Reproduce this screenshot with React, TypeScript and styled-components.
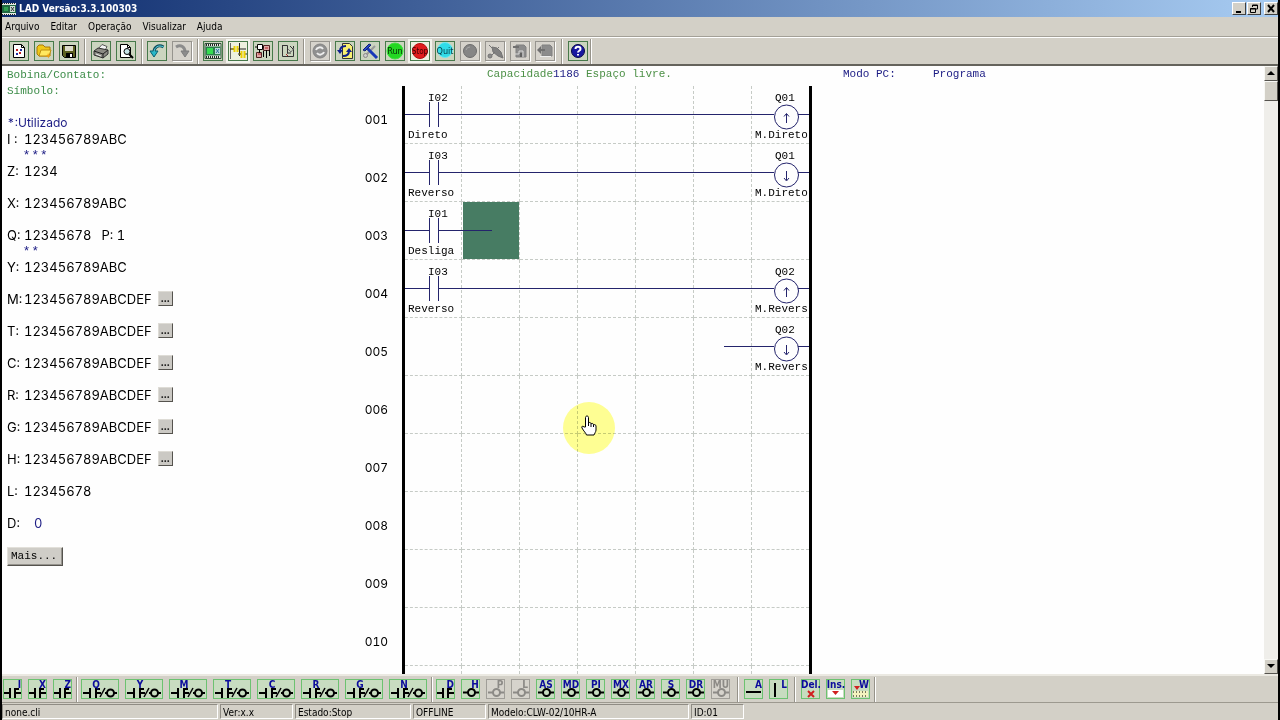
import React from "react";
import styled, { createGlobalStyle } from "styled-components";

const GlobalStyle = createGlobalStyle`
  *, *::before, *::after { box-sizing: border-box; }
  body { margin: 0; background: #000; }
  button { font: inherit; padding: 0; margin: 0; }
`;

const ui = `"DejaVu Sans Condensed", "DejaVu Sans", sans-serif`;
const mono = `"Liberation Mono", monospace`;
const wide = `Inter, "Liberation Sans", sans-serif`;
const face = "#d3d0c7";
const navy = "#1c1c84";

const Window = styled.div`
  display: flex;
  flex-direction: column;
  height: 100vh;
  min-width: 900px;
  padding: 0 2px;
  background: #000;
  font-family: ${ui};
  font-size: 10px;
  color: #000;
`;

const TitleBar = styled.header`
  display: flex;
  align-items: center;
  height: 17px;
  flex: none;
  gap: 3px;
  background: linear-gradient(90deg, #0c2a6c, #a8ccf2);
  color: #fff;
`;
const Title = styled.h1`
  flex: 1;
  margin: 0;
  font-size: 10px;
  line-height: 16px;
  font-weight: bold;
`;
const CaptionButtons = styled.div`
  display: flex;
  gap: 1px;
  & > :last-child { margin-left: 2px; }
`;
const CaptionButton = styled.button`
  width: 14px;
  height: 13px;
  display: grid;
  place-items: center;
  background: ${face};
  border: 1px solid;
  border-color: #fff #404040 #404040 #fff;
`;

const MenuBar = styled.nav`
  display: flex;
  flex: none;
  height: 20px;
  padding: 0 3px;
  gap: 11px;
  background: ${face};
  border-bottom: 1px solid #a3a097;
`;
const MenuItem = styled.button`
  border: 0;
  background: none;
  line-height: 18px;
`;

const ToolBar = styled.div`
  display: flex;
  align-items: center;
  flex: none;
  height: 29px;
  padding-left: 7px;
  background: ${face};
  border-top: 1px solid #fff;
  border-bottom: 2px solid #65635c;
`;
const ElementBar = styled(ToolBar)`
  height: 29px;
  padding-left: 1px;
  border-top: 2px solid #ebe9e2;
  border-bottom: 1px solid #9c998f;
`;
const Group = styled.div<{ $gap: number }>`
  display: flex;
  gap: ${(p) => p.$gap}px;
`;
const Divider = styled.span<{ $m: string }>`
  width: 2px;
  height: 25px;
  margin: ${(p) => p.$m};
  border-left: 1px solid #96938a;
  border-right: 1px solid #fff;
`;
const ToolButton = styled.button<{ $off?: boolean; $pressed?: boolean }>`
  width: 20px;
  height: 20px;
  display: grid;
  place-items: center;
  background: ${(p) => (p.$pressed ? "#edf0df" : p.$off ? "#d6d3cc" : "#cbd5bf")};
  border: 1px solid ${(p) => (p.$off ? "#96948e" : "#47794a")};
  box-shadow: ${(p) =>
    p.$pressed ? "0 0 0 2px #f2f2ec, -3px -3px 0 -1px #9a988f" : p.$off ? "1px 1px 0 #fff" : "none"};
  & svg { display: block; }
`;
const ElementButton = styled.button<{ $off?: boolean; $wide?: boolean }>`
  width: ${(p) => (p.$wide ? 38 : 19)}px;
  height: 20px;
  display: grid;
  place-items: center;
  background: ${(p) => (p.$off ? "#d6d3cc" : "#c8dcc0")};
  border: 1px solid ${(p) => (p.$off ? "#a09e98" : "#6cc270")};
  & svg { display: block; overflow: visible; }
`;

const Workspace = styled.main`
  display: grid;
  grid-template-columns: 350px 460px 1fr 14px;
  grid-template-rows: minmax(0, 1fr);
  flex: 1;
  min-height: 0;
  overflow: hidden;
  background: #fefefe;
`;

const SidePanel = styled.aside`
  padding: 1px 0 0 5px;
  font-family: ${wide};
  font-size: 13px;
  font-variant-numeric: tabular-nums;
  line-height: 16px;
`;
const SymbolInfo = styled.p`
  margin: 0 0 16px;
  font-family: ${mono};
  font-size: 11px;
  line-height: 16px;
  color: #3c8c48;
`;
const UsedLegend = styled.p`
  margin: 0;
  font-size: 12px;
  line-height: 16px;
  color: ${navy};
`;
const DeviceRow = styled.div`
  display: grid;
  grid-template-columns: 17px auto auto;
  grid-template-rows: 16px 16px;
  justify-content: start;
`;
const DeviceSet = styled.span<{ $value?: boolean }>`
  padding-left: ${(p) => (p.$value ? 10 : 0)}px;
  color: ${(p) => (p.$value ? navy : "#000")};
`;
const Page = styled.span`
  padding-left: 10px;
`;
const UsedMarks = styled.span`
  grid-column: 2 / -1;
  grid-row: 2;
  font-family: "Liberation Sans", sans-serif;
  color: ${navy};
`;
const MoreButton = styled.button`
  width: 15px;
  height: 15px;
  margin-left: 6px;
  background: #cbc9c4;
  border: 1px solid;
  border-color: #dedcd6 #55534e #55534e #dedcd6;
  font-size: 11px;
  font-weight: bold;
  line-height: 9px;
`;
const MaisButton = styled.button`
  display: block;
  width: 56px;
  height: 19px;
  background: #cfcdc7;
  border: 1px solid;
  border-color: #e2e0da #55534e #55534e #e2e0da;
  box-shadow: inset -1px -1px 0 #96948e;
  font-family: ${mono};
  font-size: 11px;
  line-height: 15px;
  text-align: left;
  padding-left: 3px;
`;

const Ladder = styled.section`
  position: relative;
  font-family: ${mono};
  font-size: 11px;
`;
const Capacity = styled.p`
  margin: 0;
  height: 20px;
  padding-left: 135px;
  line-height: 16px;
  color: #4c9046;
  white-space: pre;
  & b { font-weight: normal; color: ${navy}; }
`;
const Rung = styled.div`
  display: grid;
  grid-template-columns: 50px 1fr;
  height: 58px;
`;
const RungNumber = styled.span`
  padding: 25px 14px 0 0;
  font-family: ${wide};
  font-size: 12px;
  font-variant-numeric: tabular-nums;
  line-height: 18px;
  text-align: right;
`;
const RungCells = styled.div`
  display: grid;
  grid-template-columns: 57px repeat(5, 58px) 57px;
  border: solid #000;
  border-width: 0 3px;
`;
const Cell = styled.div<{ $selected?: boolean }>`
  display: grid;
  border-bottom: 1px dashed #c6cbc6;
  border-right: 1px dashed #c6cbc6;
  padding-left: ${(p) => (p.$selected ? 1 : 0)}px;
  background: ${(p) => (p.$selected ? "#477c63 content-box" : "none")};
  &:last-child { border-right: 0; }
  & > * { grid-area: 1 / 1; min-width: 0; }
`;
const DeviceName = styled.span`
  padding: 5px 0 0 23px;
  line-height: 14px;
`;
const Comment = styled.span`
  padding: 42px 0 0 3px;
  line-height: 14px;
`;
const Pointer = styled.div`
  position: absolute;
  left: 211px;
  top: 336px;
  width: 52px;
  height: 52px;
  border-radius: 50%;
  background: #ffff94;
  mix-blend-mode: multiply;
`;
const Hand = styled.svg`
  position: absolute;
  left: 228px;
  top: 348px;
`;

const ModePanel = styled.section`
  display: grid;
  grid-template-columns: 90px auto;
  justify-content: start;
  align-content: start;
  padding-left: 31px;
  font-family: ${mono};
  font-size: 11px;
  line-height: 16px;
  color: ${navy};
`;

const ScrollBar = styled.div`
  display: flex;
  flex-direction: column;
  background: #efeeea;
`;
const ScrollButton = styled.button`
  height: 15px;
  display: grid;
  place-items: center;
  background: ${face};
  border: 1px solid;
  border-color: #f8f8f4 #55534e #55534e #f8f8f4;
`;
const Thumb = styled.div`
  height: 20px;
  background: ${face};
  border: 1px solid;
  border-color: #f8f8f4 #55534e #55534e #f8f8f4;
`;
const Track = styled.div`
  flex: 1;
`;

const StatusBar = styled.footer`
  display: flex;
  flex: none;
  height: 17px;
  gap: 2px;
  padding: 1px 0;
  background: ${face};
`;
const StatusPane = styled.span<{ $w: number }>`
  width: ${(p) => p.$w}px;
  padding-left: 2px;
  line-height: 15px;
  border: 1px solid;
  border-color: #8f8c84 #fff #fff #8f8c84;
`;

/* ---------- toolbar icons ---------- */

const Ico = ({ children }: { children: React.ReactNode }) => (
  <svg width="18" height="18" viewBox="0 0 18 18" fill="none" stroke="#000" aria-hidden="true">
    {children}
  </svg>
);

const iconText = { fontFamily: "DejaVu Sans Condensed", fontSize: 9, stroke: "none", textAnchor: "middle" as const };

const icons: Record<string, React.ReactNode> = {
  Novo: (
    <Ico>
      <path d="M3.5 2.5h8l3 3v10h-11z" fill="#fff" />
      <path d="M11.5 2.5v3h3" />
      <path d="M6 7h2v2H6zM9 10h2v2H9z" fill="#c02020" stroke="none" />
      <path d="M10 7h2v2h-2zM6 11h2v2H6z" fill="#2030a0" stroke="none" />
    </Ico>
  ),
  Abrir: (
    <Ico>
      <path d="M2 5l2-2h4l2 2h5v9H4l-2-2z" fill="#f0c818" stroke="#a87808" />
      <path d="M4 14l2-6h10l-2 6z" fill="#ffe860" stroke="#c09010" />
      <path d="M13 11l1 2 2 .5-2 1-.5 2-1-2-2-.5 2-1z" fill="#f0a010" stroke="none" />
    </Ico>
  ),
  Salvar: (
    <Ico>
      <path d="M2.5 3.500h13v12h-11l-2-2z" fill="#5c6020" />
      <path d="M5 4h8v5H5z" fill="#dcdccc" stroke="none" />
      <path d="M6 11h7v4H6z" fill="#000" stroke="none" />
      <path d="M10 12h2v3h-2z" fill="#fff" stroke="none" />
    </Ico>
  ),
  Imprimir: (
    <Ico>
      <path d="M6 7l4-4.500 5 2-2 4z" fill="#f4f4f4" stroke="#555" />
      <path d="M2 9l4-3 10 2v4l-5 4-9-3z" fill="#8c8c84" stroke="#333" />
      <path d="M2 9l9 3 5-4M11 12v4" stroke="#222" />
      <path d="M4 12l5 2" stroke="#eee" />
    </Ico>
  ),
  Visualizar: (
    <Ico>
      <path d="M3.500 2.500h7l3 3v10h-10z" fill="#fff" />
      <path d="M10.500 2.500v3h3" />
      <circle cx="10" cy="9.500" r="3" fill="#c8e4e8" />
      <path d="M12 12l4 4" strokeWidth="2" />
    </Ico>
  ),
  Desfazer: (
    <Ico>
      <path d="M15.500 5c-5-3-9.500 0-9.500 5" stroke="#104c5c" strokeWidth="3" />
      <path d="M2 9h8l-4 6z" fill="#28b8c8" stroke="#086070" />
      <path d="M15.500 5c-5-2.500-9 0-9.500 5" stroke="#58d8e4" />
    </Ico>
  ),
  Refazer: (
    <Ico>
      <path d="M3 5c5-3 9 0 9 5" stroke="#8c8c8c" strokeWidth="3" />
      <path d="M8 9h8l-4 6z" fill="#8c8c8c" stroke="#7c7c7c" />
    </Ico>
  ),
  CLP: (
    <Ico>
      <path d="M1 1.500h16v15H1z" fill="#e4ece0" stroke="#34503c" />
      <path d="M2 3h14M2 15h14" stroke="#222" strokeDasharray="1 1" strokeWidth="2" />
      <path d="M1.500 4.500h15v9h-15z" fill="#2c7c4c" stroke="none" />
      <path d="M3 6h6v6H3z" fill="#34dc50" stroke="none" />
      <path d="M11 6h5v6h-5z" fill="#b8dcd8" stroke="none" />
      <path d="M12 7l3 4M15 7l-3 4" stroke="#2a6c98" />
    </Ico>
  ),
  Ladder: (
    <Ico>
      <path d="M1.500 1v16" stroke="#666" />
      <path d="M1 7h4M9 7h8M10.500 1v13M9 12h3M15 12h3" stroke="#222" />
      <path d="M5.500 4v6M8.500 4v6M12.500 9v7M15.500 9v7" stroke="#ecd000" strokeWidth="2" />
      <path d="M2 7h3M10 12h2" stroke="#a89000" />
    </Ico>
  ),
  FBD: (
    <Ico>
      <path d="M3.500 2.500h5v5h-5z" fill="#fff" />
      <path d="M2.500 10.500h5v5h-5zM9.500 3.500h6v5h-6z" fill="#e0a8a8" stroke="#502020" />
      <path d="M1 5h2M8 5h2M12.500 8v8M15.500 8v6M9.500 9v6M5.500 8v3" />
      <path d="M4 12h3M11 6h3" stroke="#b02828" />
    </Ico>
  ),
  Diagrama: (
    <Ico>
      <path d="M3 3.500h5.500v8M3.500 3.500v11h11V4M11 4l3 3M8 11h4" stroke="#333" />
      <path d="M9 7l3 3 3-4" stroke="#777" />
      <path d="M7 12l2 2" stroke="#a02828" />
    </Ico>
  ),
  Simular: (
    <Ico>
      <circle cx="9" cy="9" r="7" fill="#909090" stroke="#858585" />
      <path d="M5 8a4 4 0 0 1 7-1M13 10a4 4 0 0 1-7 1" stroke="#eee" strokeWidth="2" />
    </Ico>
  ),
  Atualizar: (
    <Ico>
      <path d="M6.500 1.500h7l3 3v12h-10z" fill="#f8f070" stroke="#333" />
      <path d="M4 9c0-4 3-5 6-5M13 9c0 4-3 5-6 5" stroke="#10208c" strokeWidth="2" />
      <path d="M1 8h6l-3 4zM10 10h6l-3-4z" fill="#10208c" stroke="none" />
    </Ico>
  ),
  Ferramentas: (
    <Ico>
      <path d="M14 4l-9 9" stroke="#999" strokeWidth="2" />
      <circle cx="4.500" cy="13.500" r="2" stroke="#888" fill="#ccc" />
      <path d="M6 6l10 10" stroke="#1838b8" strokeWidth="3" />
      <path d="M2 8l6-6 2 1-6 6z" fill="#2848c8" stroke="#102070" />
    </Ico>
  ),
  Run: (
    <Ico>
      <circle cx="9" cy="9" r="8" fill="#22d822" stroke="#40e040" />
      <text x="9" y="12" {...iconText} fill="#063006">Run</text>
    </Ico>
  ),
  Stop: (
    <Ico>
      <circle cx="9" cy="9" r="7.500" fill="#e01c1c" stroke="#b01010" />
      <text x="9" y="12" {...iconText} fontSize={8} fill="#400000">Stop</text>
    </Ico>
  ),
  Quit: (
    <Ico>
      <circle cx="9" cy="8" r="7.500" fill="#30dce8" stroke="#70e8f0" />
      <text x="9" y="12" {...iconText} fill="#063c48">Quit</text>
    </Ico>
  ),
  Monitor: (
    <Ico>
      <circle cx="9" cy="9" r="6.500" fill="#858585" stroke="#6c6c6c" />
      <path d="M5 8a4 4 0 0 1 4-3" stroke="#a8a8a8" />
    </Ico>
  ),
  Teste: (
    <Ico>
      <path d="M3 3l3 3M6 5l5 1 4 4 2 6-5-2-5-4z" fill="#808080" stroke="#747474" />
      <circle cx="4" cy="14" r="2" fill="#8c8c8c" stroke="#747474" />
      <path d="M6 13l3-3M13 5l-2 2" stroke="#747474" />
    </Ico>
  ),
  Ler: (
    <Ico>
      <path d="M5 3h8l2 2v10H5z" fill="#8c8c8c" stroke="#808080" />
      <path d="M2 5h6" stroke="#707070" strokeWidth="2" />
      <path d="M4 12h4v-3h4v6" stroke="#d8d8d8" />
      <path d="M9 11h2v4H9z" fill="#606060" stroke="none" />
    </Ico>
  ),
  Escrever: (
    <Ico>
      <path d="M6 3h8l2 2v9H6z" fill="#8c8c8c" stroke="#808080" />
      <path d="M1 8l4-4v8z" fill="#707070" stroke="none" />
      <path d="M4 8h5" stroke="#707070" strokeWidth="2" />
      <path d="M4 14.500h11" stroke="#eee" />
    </Ico>
  ),
  Ajuda: (
    <Ico>
      <circle cx="9" cy="9" r="6.500" fill="#1818a0" stroke="#080848" />
      <path d="M6.500 7c0-3 5-3 5 0 0 2-2.500 1.500-2.500 3.500M9 12v1.500" stroke="#fff" strokeWidth="2" />
    </Ico>
  ),
};

type Tool = { name: string; off?: boolean; pressed?: boolean };
const tools: { items: Tool[]; divider: string }[] = [
  { items: [{ name: "Novo" }, { name: "Abrir" }, { name: "Salvar" }], divider: "0 5px" },
  { items: [{ name: "Imprimir" }, { name: "Visualizar" }], divider: "0 4px 0 5px" },
  { items: [{ name: "Desfazer" }, { name: "Refazer", off: true }], divider: "0 4px 0 5px" },
  {
    items: [{ name: "CLP" }, { name: "Ladder", pressed: true }, { name: "FBD" }, { name: "Diagrama" }],
    divider: "0 5px",
  },
  {
    items: [
      { name: "Simular", off: true },
      { name: "Atualizar" },
      { name: "Ferramentas" },
      { name: "Run" },
      { name: "Stop", pressed: true },
      { name: "Quit" },
      { name: "Monitor", off: true },
      { name: "Teste", off: true },
      { name: "Ler", off: true },
      { name: "Escrever", off: true },
    ],
    divider: "0 5px 0 6px",
  },
  { items: [{ name: "Ajuda" }], divider: "0 2px" },
];

/* ---------- ladder element icons ---------- */

type Kind = "contact" | "coil" | "both" | "hline" | "vline" | "del" | "ins" | "wire";
type Element = { name: string; kind: Kind; off?: boolean };

const shapes: Record<Kind, React.ReactNode> = {
  contact: <path d="M0 13h5M6 8v10M11 8v10M11 9h4M11 13h6" />,
  coil: (
    <>
      <circle cx="9.500" cy="12.500" r="3.500" />
      <path d="M1 12.500h5M13 12.500h4" />
    </>
  ),
  both: (
    <>
      <path d="M1 13h6M8 8v10M14 8v10M14 9h4M14 13h5M23 13h3M32 13h3" />
      <path d="M18 17l5-9" strokeWidth="1.500" />
      <circle cx="28.500" cy="13" r="3.500" />
    </>
  ),
  hline: <path d="M1 12h15" />,
  vline: <path d="M5 3v14" />,
  del: <path d="M6 11l6 6M12 11l-6 6" stroke="#d02020" />,
  ins: (
    <>
      <path d="M1 10h15v7H1z" fill="#fff" stroke="none" />
      <path d="M5 11h7l-3.500 4z" fill="#d02020" stroke="none" />
    </>
  ),
  wire: (
    <>
      <path d="M1 11h15v6H1z" fill="#f4f4c0" stroke="none" />
      <path d="M1 12h15M1 16h15" strokeDasharray="1 2" strokeWidth="1" />
      <path d="M2 6h6l-3 4z" fill="#d02020" stroke="none" />
    </>
  ),
};

const ElementIcon = ({ name, kind, off }: Element) => {
  const isWide = kind === "both";
  const w = isWide ? 36 : 17;
  const middle = isWide || kind === "del" || kind === "ins" || kind === "coil";
  const single = kind === "coil" && name.length === 1 && name !== "S";
  return (
    <svg
      width={w}
      height="18"
      viewBox={`0 0 ${w} 18`}
      fill="none"
      stroke={off ? "#8c8a86" : "#000"}
      strokeWidth="2"
      aria-hidden="true"
    >
      {shapes[kind]}
      <text
        x={isWide ? 14 : single ? 13 : middle ? 9 : 17}
        y="8"
        textAnchor={middle ? "middle" : "end"}
        fontFamily="DejaVu Sans Condensed"
        fontWeight="bold"
        fontSize="10"
        stroke="none"
        fill={off ? "#8c8a86" : "#0c0c9c"}
      >
        {name}
      </text>
    </svg>
  );
};

const coil = (name: string, off = false): Element => ({ name, kind: "coil", off });
const elements: { items: Element[]; divider: string }[] = [
  { items: ["I", "X", "Z"].map((name) => ({ name, kind: "contact" })), divider: "0 3px 0 4px" },
  {
    items: ["Q", "Y", "M", "T", "C", "R", "G", "N"].map((name) => ({ name, kind: "both" })),
    divider: "0 3px 0 4px",
  },
  {
    items: [
      { name: "D", kind: "contact" },
      coil("H"),
      coil("P", true),
      coil("L", true),
      ...["AS", "MD", "PI", "MX", "AR", "S", "DR"].map((n) => coil(n)),
      coil("MU", true),
    ],
    divider: "0 5px 0 7px",
  },
  { items: [{ name: "A", kind: "hline" }, { name: "L", kind: "vline" }], divider: "0 5px 0 6px" },
  {
    items: [
      { name: "Del.", kind: "del" },
      { name: "Ins.", kind: "ins" },
      { name: "W", kind: "wire" },
    ],
    divider: "0 3px 0 4px",
  },
];

/* ---------- ladder program ---------- */

type Part = { kind: "contact" | "up" | "down"; name: string; comment: string };
type RungData = { contact?: Part; coil?: Part; wire: "full" | "stub" | "tail" | "none"; selected?: number };

const rungs: RungData[] = [
  { contact: { kind: "contact", name: "I02", comment: "Direto" }, coil: { kind: "up", name: "Q01", comment: "M.Direto" }, wire: "full" },
  { contact: { kind: "contact", name: "I03", comment: "Reverso" }, coil: { kind: "down", name: "Q01", comment: "M.Direto" }, wire: "full" },
  { contact: { kind: "contact", name: "I01", comment: "Desliga" }, wire: "stub", selected: 1 },
  { contact: { kind: "contact", name: "I03", comment: "Reverso" }, coil: { kind: "up", name: "Q02", comment: "M.Revers" }, wire: "full" },
  { coil: { kind: "down", name: "Q02", comment: "M.Revers" }, wire: "tail" },
  ...Array.from({ length: 6 }, (): RungData => ({ wire: "none" })),
];

const glyphs: Record<Part["kind"], React.ReactNode> = {
  contact: <path d="M0 28.500h24M33 28.500h25M24.500 16v25M33.500 16v25" />,
  up: (
    <>
      <path d="M0 28.500h22M46 28.500h11M34.500 37v-9M32 30.500l2.500-3 2.500 3" />
      <circle cx="34.500" cy="31" r="12" />
    </>
  ),
  down: (
    <>
      <path d="M0 28.500h22M46 28.500h11M34.500 27v9M32 34l2.500 3 2.500-3" />
      <circle cx="34.500" cy="31" r="12" />
    </>
  ),
};

const Glyph = ({ children }: { children: React.ReactNode }) => (
  <svg width="58" height="57" viewBox="0 0 58 57" fill="none" stroke="#24246c" aria-hidden="true">
    {children}
  </svg>
);

const wirePath = (wire: RungData["wire"], col: number) => {
  if (wire === "full") return "M0 28.500h58";
  if (wire === "stub" && col === 1) return "M0 28.500h29";
  if (wire === "tail" && col === 5) return "M30 28.500h28";
  return null;
};

const RungRow = ({ rung, index }: { rung: RungData; index: number }) => (
  <Rung>
    <RungNumber>{index < 10 ? String(index + 1).padStart(3, "0") : null}</RungNumber>
    <RungCells>
      {Array.from({ length: 7 }, (_, col) => {
        const part = col === 0 ? rung.contact : col === 6 ? rung.coil : undefined;
        const path = col > 0 && col < 6 ? wirePath(rung.wire, col) : null;
        return (
          <Cell key={col} $selected={rung.selected === col}>
            {part && (
              <>
                <Glyph>{glyphs[part.kind]}</Glyph>
                <DeviceName>{part.name}</DeviceName>
                <Comment>{part.comment}</Comment>
              </>
            )}
            {path && (
              <Glyph>
                <path d={path} />
              </Glyph>
            )}
          </Cell>
        );
      })}
    </RungCells>
  </Rung>
);

type Device = { label: string; set: string; page?: string; used?: string; more?: boolean; value?: boolean };
const devices: Device[] = [
  { label: "I :", set: "123456789ABC", used: "* * *" },
  { label: "Z:", set: "1234" },
  { label: "X:", set: "123456789ABC" },
  { label: "Q:", set: "12345678", page: "P: 1", used: "* *" },
  { label: "Y:", set: "123456789ABC" },
  ...["M:", "T:", "C:", "R:", "G:", "H:"].map((label) => ({ label, set: "123456789ABCDEF", more: true })),
  { label: "L:", set: "12345678" },
  { label: "D:", set: "0", value: true },
];

const panes: [string, number][] = [
  ["none.cli", 216],
  ["Ver:x.x", 73],
  ["Estado:Stop", 116],
  ["OFFLINE", 73],
  ["Modelo:CLW-02/10HR-A", 201],
  ["ID:01", 53],
];

const Arrow = ({ d }: { d: string }) => (
  <svg width="8" height="5" viewBox="0 0 8 5" aria-hidden="true">
    <path d={d} fill="#000" />
  </svg>
);

export default function App() {
  return (
    <>
      <GlobalStyle />
      <Window>
        <TitleBar>
          <svg width="14" height="12" viewBox="0 0 14 12" aria-hidden="true">
            <path d="M0 0h14v12H0z" fill="#e4e8e4" />
            <path d="M0 2h14v8H0z" fill="#206840" />
            <path d="M0 .5h14M0 11.500h14" stroke="#222" strokeDasharray="1 1" />
            <path d="M2 4h4v4H2z" fill="#30a050" />
            <path d="M8 3h5v6H8z" fill="#d0e0d8" />
            <path d="M9 4l3 4M12 4L9 8" stroke="#333" />
          </svg>
          <Title>LAD Versão:3.3.100303</Title>
          <CaptionButtons>
            <CaptionButton aria-label="Minimizar">
              <svg width="10" height="9" viewBox="0 0 10 9"><path d="M2 7h5v2H2z" /></svg>
            </CaptionButton>
            <CaptionButton aria-label="Restaurar">
              <svg width="10" height="9" viewBox="0 0 10 9" fill="none" stroke="#000">
                <path d="M3.500 3V1h5v4H7M1.500 4.500h5v4h-5zM3 1.500h6M1 5h6" />
              </svg>
            </CaptionButton>
            <CaptionButton aria-label="Fechar">
              <svg width="10" height="9" viewBox="0 0 10 9" stroke="#000" strokeWidth="2">
                <path d="M2 1l6 7M8 1L2 8" />
              </svg>
            </CaptionButton>
          </CaptionButtons>
        </TitleBar>

        <MenuBar>
          {["Arquivo", "Editar", "Operação", "Visualizar", "Ajuda"].map((m) => (
            <MenuItem key={m}>{m}</MenuItem>
          ))}
        </MenuBar>

        <ToolBar role="toolbar">
          {tools.map((group, i) => (
            <React.Fragment key={i}>
              <Group $gap={5}>
                {group.items.map((t) => (
                  <ToolButton key={t.name} aria-label={t.name} $off={t.off} $pressed={t.pressed}>
                    {icons[t.name]}
                  </ToolButton>
                ))}
              </Group>
              <Divider $m={group.divider} />
            </React.Fragment>
          ))}
        </ToolBar>

        <Workspace>
          <SidePanel>
            <SymbolInfo>
              Bobina/Contato:
              <br />
              Símbolo:
            </SymbolInfo>
            <UsedLegend>*:Utilizado</UsedLegend>
            {devices.map((d) => (
              <DeviceRow key={d.label}>
                <span>{d.label}</span>
                <DeviceSet $value={d.value}>{d.set}</DeviceSet>
                {d.page && <Page>{d.page}</Page>}
                {d.more && <MoreButton aria-label={`Mais ${d.label}`}>...</MoreButton>}
                {d.used && <UsedMarks>{d.used}</UsedMarks>}
              </DeviceRow>
            ))}
            <MaisButton>Mais...</MaisButton>
          </SidePanel>

          <Ladder>
            <Capacity>
              Capacidade<b>1186</b> Espaço livre.
            </Capacity>
            {rungs.map((r, i) => (
              <RungRow key={i} rung={r} index={i} />
            ))}
            <Pointer />
            <Hand width="18" height="24" viewBox="0 0 18 24" aria-hidden="true">
              <path
                d="M5.500 13V3.500c0-2 3-2 3 0V9c1-1 2.500-.5 2.500.8 1-.8 2.500-.3 2.500 1 1-.5 2.500 0 2.500 1.200V16c0 2-1.500 3-2 5H6.500c-.5-2-3-4-4.500-7-.8-1.800.8-2.500 2-1z"
                fill="#fff"
                stroke="#000"
                strokeLinejoin="round"
              />
              <path d="M8.500 9v3M11 10v3M13.500 11v2" stroke="#000" />
            </Hand>
          </Ladder>

          <ModePanel>
            <span>Modo PC:</span>
            <span>Programa</span>
          </ModePanel>

          <ScrollBar>
            <ScrollButton aria-label="Rolar para cima">
              <Arrow d="M4 0l4 4H0z" />
            </ScrollButton>
            <Thumb />
            <Track />
            <ScrollButton aria-label="Rolar para baixo">
              <Arrow d="M0 0h8L4 4z" />
            </ScrollButton>
          </ScrollBar>
        </Workspace>

        <ElementBar role="toolbar">
          {elements.map((g, i) => (
            <React.Fragment key={i}>
              <Group $gap={6}>
                {g.items.map((e) => (
                  <ElementButton key={e.name} aria-label={e.name} $off={e.off} $wide={e.kind === "both"}>
                    <ElementIcon {...e} />
                  </ElementButton>
                ))}
              </Group>
              <Divider $m={g.divider} />
            </React.Fragment>
          ))}
        </ElementBar>

        <StatusBar>
          {panes.map(([text, w]) => (
            <StatusPane key={text} $w={w}>
              {text}
            </StatusPane>
          ))}
        </StatusBar>
      </Window>
    </>
  );
}
